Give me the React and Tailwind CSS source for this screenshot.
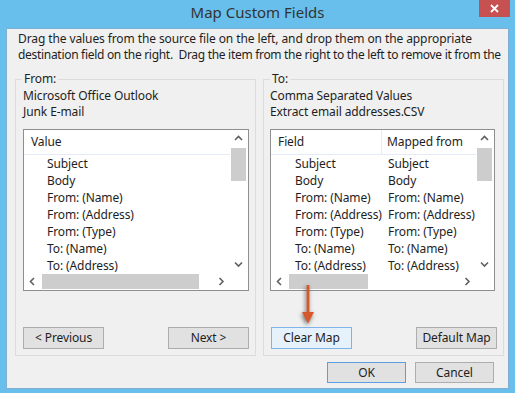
import React from "react";

const fields = [
  "Subject",
  "Body",
  "From: (Name)",
  "From: (Address)",
  "From: (Type)",
  "To: (Name)",
  "To: (Address)",
];

function Chevron({ dir }) {
  const d = {
    up: "M1 5 L4.5 1.5 L8 5",
    down: "M1 1.5 L4.5 5 L8 1.5",
    left: "M5 1 L1.5 4.5 L5 8",
    right: "M1.5 1 L5 4.5 L1.5 8",
  }[dir];
  const w = dir === "up" || dir === "down" ? 9 : 7;
  const h = dir === "up" || dir === "down" ? 7 : 9;
  return (
    <svg width={w} height={h} viewBox={`0 0 ${w} ${h}`}>
      <path d={d} fill="none" stroke="#606060" strokeWidth="1.6" />
    </svg>
  );
}

function ListBox({ width, thumbLeft, thumbWidth, children }) {
  return (
    <div
      className="flex h-[162px] flex-col border border-[#8e8f8f] bg-white"
      style={{ width }}
    >
      <div className="flex h-[143px]">
        <div className="min-w-0 flex-1 overflow-hidden">{children}</div>
        <div className="flex w-[18px] flex-col pl-[1px] pr-[2px]">
          <div className="flex h-[17px] items-center justify-center">
            <Chevron dir="up" />
          </div>
          <div className="mt-[1px] h-[33px] bg-[#cdcdcd]" />
          <div className="flex-1" />
          <div className="flex h-[17px] items-center justify-center">
            <Chevron dir="down" />
          </div>
        </div>
      </div>
      <div className="flex h-[17px]">
        <div className="flex flex-1 items-center">
          <div className="flex h-[17px] w-[17px] items-center justify-center">
            <Chevron dir="left" />
          </div>
          <div
            className="h-[15px] bg-[#cdcdcd]"
            style={{ marginLeft: thumbLeft, width: thumbWidth }}
          />
          <div className="flex-1" />
          <div className="flex h-[17px] w-[17px] items-center justify-center">
            <Chevron dir="right" />
          </div>
        </div>
        <div className="w-[18px]" />
      </div>
    </div>
  );
}

function Btn({ children, className = "" }) {
  return (
    <div
      className={`flex h-[22px] w-[81px] items-center justify-center border ${className || "border-[#adadad] bg-[#e1e1e1]"}`}
    >
      {children}
    </div>
  );
}

function Group({ legend, lines, children, buttons, listPad }) {
  return (
    <div className="relative flex h-[277px] w-[241px] flex-col border border-[#dcdcdc]">
      <span className="absolute left-[6px] top-[-9px] bg-[#f0f0f0] px-[2px] leading-[16px]">
        {legend}
      </span>
      <div className="pt-[8px] leading-[16px]" style={{ paddingLeft: listPad }}>
        {lines.map((l) => (
          <div key={l}>{l}</div>
        ))}
      </div>
      <div className="mt-[9px]" style={{ paddingLeft: listPad }}>
        {children}
      </div>
      <div className="mt-[36px] flex justify-between pl-[7px] pr-[6px]">
        {buttons}
      </div>
    </div>
  );
}

export default function App() {
  return (
    <div className="relative flex h-[393px] w-[515px] flex-col bg-[#68bfeb] font-['Noto_Sans','Liberation_Sans',sans-serif] text-[12px] tracking-[-0.1px] text-[#1e1e1e]">
      <div className="relative flex h-[28px] items-center justify-center">
        <span className="pb-[4px] text-[15px] tracking-normal text-[#333333]">Map Custom Fields</span>
        <div className="absolute right-[5px] top-0 flex h-[17px] w-[31px] items-center justify-center bg-[#c75050]">
          <svg width="9" height="9" viewBox="0 0 9 9">
            <path d="M1 1 L8 8 M8 1 L1 8" stroke="white" strokeWidth="1.8" />
          </svg>
        </div>
      </div>

      <div className="mx-[6px] flex h-[361px] flex-col border border-[#7fb0d4] bg-[#f0f0f0]">
        <div className="h-[50px] whitespace-nowrap pl-[11px] pt-[2px] leading-[16px]">
          <div>
            Drag the values from the source file on the left, and drop them on the appropriate
          </div>
          <div className="tracking-[-0.3px]">
            destination field on the right.&nbsp; Drag the item from the right to the left to remove it from the
          </div>
        </div>

        <div className="flex gap-[7px] pl-[8px]">
          <Group
            legend="From:"
            lines={["Microsoft Office Outlook", "Junk E-mail"]}
            listPad={7}
            buttons={
              <>
                <Btn>&lt; Previous</Btn>
                <Btn>Next &gt;</Btn>
              </>
            }
          >
            <ListBox width={226} thumbLeft={1} thumbWidth={157}>
              <div className="flex h-[25px] items-center border-b border-[#e3ecf6] pl-[7px]">
                Value
              </div>
              {fields.map((f) => (
                <div key={f} className="flex h-[17px] items-center pl-[23px]">
                  {f}
                </div>
              ))}
            </ListBox>
          </Group>

          <Group
            legend="To:"
            lines={["Comma Separated Values", "Extract email addresses.CSV"]}
            listPad={6}
            buttons={
              <>
                <Btn className="border-[#7eb4ea] bg-[#e5f1fb]">Clear Map</Btn>
                <Btn>Default Map</Btn>
              </>
            }
          >
            <ListBox width={225} thumbLeft={1} thumbWidth={79}>
              <div className="flex h-[25px] border-b border-[#e3ecf6]">
                <div className="flex w-[111px] items-center border-r border-[#e3ecf6] pl-[7px]">
                  Field
                </div>
                <div className="flex items-center whitespace-nowrap pl-[5px]">Mapped from</div>
              </div>
              {fields.map((f) => (
                <div key={f} className="flex h-[17px] items-center whitespace-nowrap">
                  <div className="w-[117px] pl-[24px]">{f}</div>
                  <div>{f}</div>
                </div>
              ))}
            </ListBox>
          </Group>
        </div>

        <div className="mt-[6px] flex justify-end gap-[9px] pr-[14px]">
          <div className="flex h-[21px] w-[79px] items-center justify-center border border-[#5b9fe0] bg-[#e1e1e1]">
            OK
          </div>
          <div className="flex h-[21px] w-[79px] items-center justify-center border border-[#adadad] bg-[#e1e1e1]">
            Cancel
          </div>
        </div>
      </div>

      <svg
        className="absolute left-[300px] top-[285px] drop-shadow-[-1px_2px_2px_rgba(0,0,0,0.55)]"
        width="16"
        height="40"
        viewBox="0 0 16 40"
      >
        <line x1="8" y1="0" x2="8" y2="29" stroke="#d4582a" strokeWidth="2.8" />
        <path d="M2 27 L14 27 L8 38.5 Z" fill="#d4582a" />
      </svg>
    </div>
  );
}
